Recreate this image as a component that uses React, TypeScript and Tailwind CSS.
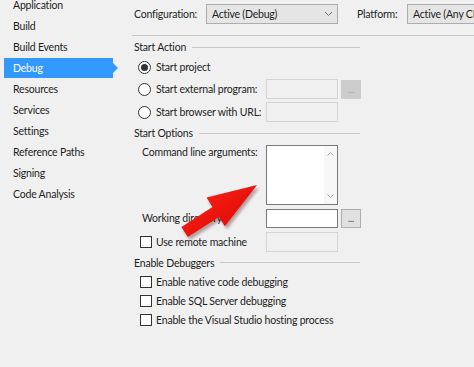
import type { ReactNode } from 'react'

const NAV = [
  'Application',
  'Build',
  'Build Events',
  'Debug',
  'Resources',
  'Services',
  'Settings',
  'Reference Paths',
  'Signing',
  'Code Analysis',
]

function Radio({ checked }: { checked?: boolean }) {
  return (
    <span className="w-[13px] h-[13px] rounded-full border border-[#333333] bg-white flex items-center justify-center shrink-0">
      {checked && <span className="w-[7px] h-[7px] rounded-full bg-[#333333]" />}
    </span>
  )
}

function Check() {
  return <span className="w-[12px] h-[12px] border border-[#333333] bg-white shrink-0" />
}

function Header({ label, h = 'h-[20px]' }: { label: string; h?: string }) {
  return (
    <div className={`${h} w-[232px] pl-[6px] flex items-center`}>
      <span>{label}</span>
      <span className="flex-1 h-px bg-[#c8c8c8] ml-[6px]" />
    </div>
  )
}

function TextBox({ enabled }: { enabled?: boolean }) {
  return (
    <div
      className={
        enabled
          ? 'w-[72px] h-[19px] border border-[#7a7a7a] bg-white'
          : 'w-[72px] h-[20px] border border-[#d4d4d4] bg-[#f0f0f0]'
      }
    />
  )
}

function Browse({ enabled }: { enabled?: boolean }) {
  return (
    <div
      className={
        enabled
          ? 'ml-[3px] w-[20px] h-[19px] border border-[#adadad] bg-[#e1e1e1] flex items-center justify-center text-[9px] text-[#333333] leading-none'
          : 'ml-[3px] w-[20px] h-[19px] border border-[#cccccc] bg-[#cccccc] flex items-center justify-center text-[9px] text-[#a0a0a0] leading-none'
      }
    >
      ...
    </div>
  )
}

function Row({ h, left, children }: { h: string; left: ReactNode; children?: ReactNode }) {
  return (
    <div className={`flex items-center ${h}`}>
      <div className="w-[138px] flex items-center">{left}</div>
      {children}
    </div>
  )
}

function Chevron() {
  return (
    <svg width="9" height="6" viewBox="0 0 9 6" className="shrink-0">
      <polyline points="1,1 4.5,4.5 8,1" fill="none" stroke="#707070" strokeWidth="1" />
    </svg>
  )
}

const ARROW = '257,185 206.5,197.6 212.5,206.9 181.4,226.9 187.8,236.9 218.9,217 224.9,226.2'

export default function App() {
  return (
    <div
      className="relative w-[474px] h-[367px] overflow-hidden bg-[#f0f0f0] flex text-[10.5px] tracking-[-0.2px] leading-[14px] text-[#1e1e1e] whitespace-nowrap"
      style={{ fontFamily: 'Lato, "Noto Sans", sans-serif' }}
    >
      <nav className="w-[128px] shrink-0 -mt-[6px]">
        {NAV.map((item) =>
          item === 'Debug' ? (
            <div key={item} className="flex items-center h-[21px]">
              <div className="ml-[4px] w-[109px] h-[20px] bg-[#3399ff] text-white flex items-center pl-[9px]">
                {item}
              </div>
              <span className="w-0 h-0 border-y-[5px] border-y-transparent border-l-[5px] border-l-[#3399ff]" />
            </div>
          ) : (
            <div key={item} className="flex items-center h-[21px] pl-[13px]">
              {item}
            </div>
          ),
        )}
      </nav>

      <main className="flex-1 flex flex-col">
        <div className="flex items-center h-[20px] mt-[4px] pl-[6px]">
          <span className="w-[72px]">Configuration:</span>
          <div className="w-[132px] h-[20px] border border-[#adadad] bg-[#e5e5e5] flex items-center pl-[5px] pr-[4px]">
            <span className="flex-1">Active (Debug)</span>
            <Chevron />
          </div>
          <span className="ml-[19px] w-[50px]">Platform:</span>
          <div className="w-[100px] h-[20px] border border-[#adadad] bg-[#e5e5e5] flex items-center pl-[5px] shrink-0">
            Active (Any CPU)
          </div>
        </div>

        <div className="mt-[11px] ml-[4px] h-px bg-[#c8c8c8]" />

        <div className="mt-[1px]" />
        <Header label="Start Action" />

        <div className="flex items-center h-[20px] pl-[10px] gap-[5px]">
          <Radio checked />
          <span>Start project</span>
        </div>

        <Row h="h-[22px] mt-[1px]" left={<div className="pl-[10px] flex items-center gap-[5px]"><Radio /><span>Start external program:</span></div>}>
          <TextBox />
          <Browse />
        </Row>

        <Row h="h-[22px] mt-[1px]" left={<div className="pl-[10px] flex items-center gap-[5px]"><Radio /><span>Start browser with URL:</span></div>}>
          <TextBox />
        </Row>

        <Header label="Start Options" />

        <div className="flex items-start mt-[2px]">
          <div className="w-[138px] pl-[14px]">Command line arguments:</div>
          <div className="w-[72px] h-[60px] border border-[#7a7a7a] bg-white flex justify-end">
            <div className="w-[13px] bg-[#f7f7f7] flex flex-col items-center justify-between py-[6px]">
              <svg width="7" height="4" viewBox="0 0 7 4">
                <polyline points="0.5,3.5 3.5,0.5 6.5,3.5" fill="none" stroke="#a8a8a8" strokeWidth="1" />
              </svg>
              <svg width="7" height="4" viewBox="0 0 7 4">
                <polyline points="0.5,0.5 3.5,3.5 6.5,0.5" fill="none" stroke="#a8a8a8" strokeWidth="1" />
              </svg>
            </div>
          </div>
        </div>

        <Row h="h-[22px] mt-[2px]" left={<span className="pl-[14px]">Working directory:</span>}>
          <TextBox enabled />
          <Browse enabled />
        </Row>

        <Row h="h-[22px] mt-[2px]" left={<div className="pl-[12px] flex items-center gap-[4px]"><Check /><span>Use remote machine</span></div>}>
          <TextBox />
        </Row>

        <Header label="Enable Debuggers" h="h-[19px]" />

        <div className="flex items-center h-[19px] pl-[12px] gap-[4px]">
          <Check />
          <span>Enable native code debugging</span>
        </div>
        <div className="flex items-center h-[19px] pl-[12px] gap-[4px]">
          <Check />
          <span>Enable SQL Server debugging</span>
        </div>
        <div className="flex items-center h-[19px] pl-[12px] gap-[4px]">
          <Check />
          <span>Enable the Visual Studio hosting process</span>
        </div>
      </main>

      <svg className="absolute inset-0 pointer-events-none" width="474" height="367" viewBox="0 0 474 367">
        <defs>
          <filter id="sh" x="-20%" y="-20%" width="140%" height="140%">
            <feGaussianBlur stdDeviation="1.5" />
          </filter>
          <linearGradient id="rg" x1="0" y1="0" x2="1" y2="1">
            <stop offset="0" stopColor="#ff2a1a" />
            <stop offset="1" stopColor="#d80000" />
          </linearGradient>
        </defs>
        <polygon transform="translate(2,3)" filter="url(#sh)" fill="rgba(60,0,0,0.35)" points={ARROW} />
        <polygon fill="url(#rg)" points={ARROW} />
      </svg>
    </div>
  )
}
